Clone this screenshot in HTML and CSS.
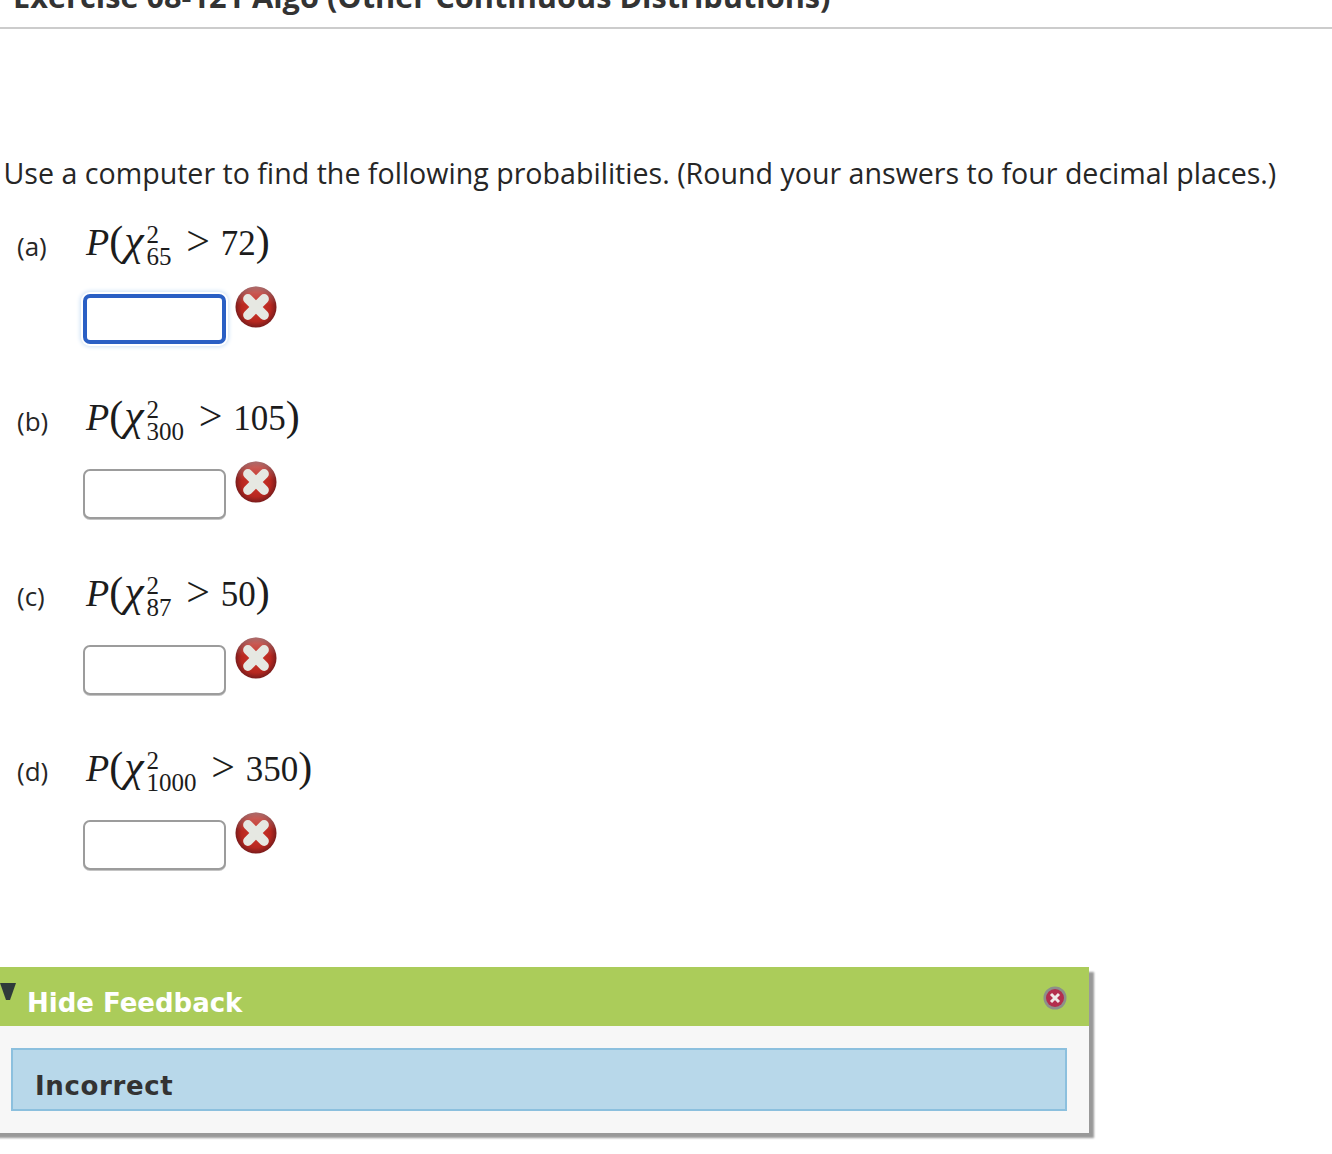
FILE: index.html
```html
<!DOCTYPE html>
<html lang="en">
<head>
<meta charset="utf-8">
<title>Exercise 08-121 Algo</title>
<link rel="stylesheet" href="styles.css">
</head>
<body>
<svg class="defs" width="0" height="0" aria-hidden="true">
  <defs>
    <radialGradient id="redball" cx="50%" cy="50%" r="50%">
      <stop offset="0" stop-color="#d4382c"/>
      <stop offset="0.72" stop-color="#b6271f"/>
      <stop offset="1" stop-color="#7a1c1c"/>
    </radialGradient>
    <linearGradient id="sheen" x1="0" y1="0" x2="0" y2="1">
      <stop offset="0" stop-color="#fff" stop-opacity="0.35"/>
      <stop offset="0.45" stop-color="#fff" stop-opacity="0"/>
    </linearGradient>
    <symbol id="err" viewBox="0 0 44 44">
      <circle cx="22" cy="22" r="21.5" fill="url(#redball)"/>
      <circle cx="22" cy="22" r="21.5" fill="url(#sheen)"/>
      <path d="M13.5 13.5 30.5 30.5M30.5 13.5 13.5 30.5" stroke="#e6e8e2" stroke-width="10" stroke-linecap="round"/>
    </symbol>
  </defs>
</svg>
<header class="title-bar"><h1 class="title">Exercise 08-121 Algo (Other Continuous Distributions)</h1></header>
<main>
  <p class="intro">Use a computer to find the following probabilities. (Round your answers to four decimal places.)</p>

  <section class="part">
    <div class="formula-row">
      <span class="label">(a)</span>
      <span class="math"><i class="var-p">P</i><span class="paren open">(</span><i class="var-chi">χ</i><span class="scripts"><sup>2</sup><sub>65</sub></span> <span class="op">&gt;</span> 72<span class="paren">)</span></span>
    </div>
    <div class="answer-row">
      <input class="answer focused" type="text" aria-label="Answer a">
      <svg class="err"><use href="#err"/></svg>
    </div>
  </section>

  <section class="part">
    <div class="formula-row">
      <span class="label">(b)</span>
      <span class="math"><i class="var-p">P</i><span class="paren open">(</span><i class="var-chi">χ</i><span class="scripts"><sup>2</sup><sub>300</sub></span> <span class="op">&gt;</span> 105<span class="paren">)</span></span>
    </div>
    <div class="answer-row">
      <input class="answer" type="text" aria-label="Answer b">
      <svg class="err"><use href="#err"/></svg>
    </div>
  </section>

  <section class="part">
    <div class="formula-row">
      <span class="label">(c)</span>
      <span class="math"><i class="var-p">P</i><span class="paren open">(</span><i class="var-chi">χ</i><span class="scripts"><sup>2</sup><sub>87</sub></span> <span class="op">&gt;</span> 50<span class="paren">)</span></span>
    </div>
    <div class="answer-row">
      <input class="answer" type="text" aria-label="Answer c">
      <svg class="err"><use href="#err"/></svg>
    </div>
  </section>

  <section class="part">
    <div class="formula-row">
      <span class="label">(d)</span>
      <span class="math"><i class="var-p">P</i><span class="paren open">(</span><i class="var-chi">χ</i><span class="scripts"><sup>2</sup><sub>1000</sub></span> <span class="op">&gt;</span> 350<span class="paren">)</span></span>
    </div>
    <div class="answer-row">
      <input class="answer" type="text" aria-label="Answer d">
      <svg class="err"><use href="#err"/></svg>
    </div>
  </section>

  <section class="feedback">
    <div class="feedback-head">
      <svg class="caret" viewBox="0 0 16 18" width="16" height="18"><path d="M0 0H16L10 17H6Z" fill="#2f3a3a"/></svg>
      <span class="feedback-title">Hide Feedback</span>
      <svg class="close" viewBox="0 0 24 24" width="24" height="24">
        <circle cx="12" cy="12" r="11.5" fill="#8d8f8a"/>
        <circle cx="12" cy="12" r="9" fill="#b32e4d"/>
        <path d="M8 8 16 16M16 8 8 16" stroke="#f0e8e8" stroke-width="3"/>
      </svg>
    </div>
    <div class="feedback-body">
      <div class="verdict">Incorrect</div>
    </div>
  </section>
</main>
</body>
</html>
```
FILE: styles.css
```css
* { box-sizing: border-box; }
html, body { margin: 0; padding: 0; background: #fff; }
body { height: 1154px; overflow: hidden; font-family: "Open Sans", sans-serif; color: #333; }
.defs { position: absolute; }

.title-bar {
  height: 29px;
  border-bottom: 2px solid #ccc;
  overflow: hidden;
  display: flex;
  align-items: flex-end;
  padding-bottom: 11px;
}
.title {
  margin: 0;
  padding-left: 13px;
  font-size: 30.7px;
  line-height: 40px;
  font-weight: 700;
  white-space: nowrap;
}

.intro {
  margin: 0;
  padding: 124px 0 0 3.5px;
  height: 165px;
  font-size: 28.6px;
  line-height: 40px;
  color: #262626;
  white-space: nowrap;
}

.part { height: 175.33px; padding-left: 17px; }

.formula-row {
  display: flex;
  align-items: center;
  height: 70px;
  padding-top: 33px;
}
.label { width: 69px; font-size: 26px; color: #262626; }
.math {
  font-family: "Liberation Serif", serif;
  font-size: 35px;
  color: #1c1c1c;
  white-space: nowrap;
  line-height: 40px;
  height: 40px;
  margin-top: -9px;
}
.var-p { font-size: 38px; line-height: 40px; }
.paren { font-size: 42px; line-height: 40px; }
.paren.open { margin-right: 1px; }
.var-chi { font-size: 44px; line-height: 40px; margin-right: 3px; }
.op { font-size: 42px; line-height: 40px; margin-right: 2px; }
.scripts {
  display: inline-flex;
  flex-direction: column;
  vertical-align: 12px;
  font-size: 25px;
  line-height: 22px;
  height: 22px;
  margin-right: 6px;
}
.scripts sup, .scripts sub { display: block; font-size: inherit; line-height: 22px; vertical-align: baseline; }

.answer-row {
  display: flex;
  align-items: flex-start;
  padding-left: 66px;
  margin-top: 22px;
}
.answer {
  width: 143px;
  height: 50px;
  margin-top: 8px;
  border: 2px solid #9c9c9c;
  border-radius: 7px;
  background: #fff;
  box-shadow: 0 1px 0 #c4c4c4;
  outline: none;
}
.answer.focused {
  border: 4px solid #2a5fc4;
  box-shadow: 0 0 0 2px #fff, 0 0 4px 3px #cfe2f6;
}
.err { width: 42px; height: 42px; margin-left: 9px; filter: blur(0.5px); }

.feedback {
  width: 1099px;
  margin-left: -10px;
  margin-top: 72px;
  background: #f7f7f7;
  box-shadow: 5px 5px 2px #999;
  padding-bottom: 22px;
}
.feedback-head {
  position: relative;
  height: 59px;
  background: #abcc5a;
  display: flex;
  align-items: center;
  padding: 12px 22px 0 37px;
  justify-content: space-between;
}
.caret { position: absolute; left: 10px; top: 16px; }
.feedback-title {
  font-family: "DejaVu Sans", sans-serif;
  font-weight: 700;
  font-size: 26px;
  color: #fff;
}
.close { margin-top: -10px; filter: blur(0.5px); }
.feedback-body { padding: 22px 22px 0 21px; }
.verdict {
  height: 63px;
  border: 2px solid #8cc0de;
  background: #b8d8ea;
  padding: 12px 0 0 22px;
  display: flex;
  align-items: center;
  font-family: "DejaVu Sans", sans-serif;
  font-weight: 700;
  font-size: 26px;
  letter-spacing: 0.65px;
  color: #333;
}
```
